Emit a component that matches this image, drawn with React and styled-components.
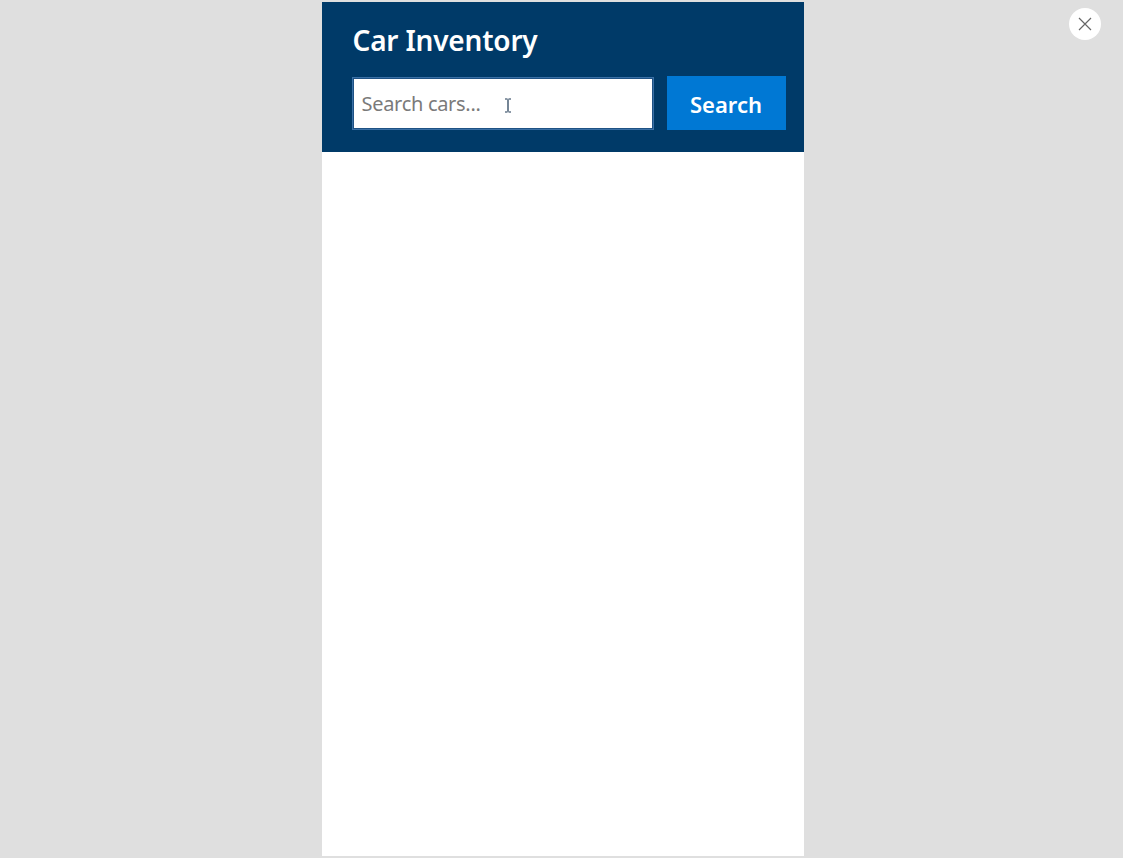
import React from 'react';
import styled, { createGlobalStyle } from 'styled-components';

const Global = createGlobalStyle`
  html, body { margin: 0; padding: 0; background: #dfdfdf; }
  body { font-family: "Noto Sans", "Open Sans", sans-serif; }
`;

const Page = styled.div`
  position: relative;
  height: 858px;
  display: flex;
  justify-content: center;
  padding-top: 2px;
  box-sizing: border-box;
`;

const Panel = styled.div`
  width: 482px;
  height: 854px;
  margin-left: 2px;
  background: #ffffff;
  display: flex;
  flex-direction: column;
`;

const Header = styled.header`
  background: #003a68;
  height: 150px;
  box-sizing: border-box;
  padding: 19px 18px 0 30px;
`;

const Title = styled.h1`
  margin: 0 0 0 1px;
  color: #ffffff;
  font-size: 28px;
  font-weight: 600;
  line-height: 38px;
  letter-spacing: -0.2px;
`;

const SearchRow = styled.div`
  display: flex;
  gap: 13px;
  margin-top: 17px;
  align-items: flex-start;
`;

const InputWrap = styled.div`
  position: relative;
  width: 302px;
  margin-top: 1px;
`;

const Input = styled.input`
  width: 100%;
  height: 53px;
  box-sizing: border-box;
  border: 2px solid #1f5284;
  box-shadow: inset 0 0 0 0 transparent, 0 0 0 0 transparent;
  outline: 1px solid #3a70a6;
  outline-offset: -1px;
  padding: 0 8px;
  font-family: "Noto Sans", sans-serif;
  font-size: 20px;
  letter-spacing: -0.3px;
  color: #333;
  background: #fff;
  &::placeholder { color: #7a7a7a; }
`;

const Cursor = styled.svg`
  position: absolute;
  left: 152px;
  top: 21px;
`;

const Button = styled.button`
  width: 119px;
  height: 54px;
  border: none;
  background: #0078d4;
  color: #fff;
  font-family: "Noto Sans", sans-serif;
  font-weight: 600;
  font-size: 22px;
  padding-top: 2px;
  cursor: pointer;
`;

const Close = styled.button`
  position: absolute;
  top: 8px;
  right: 22px;
  width: 32px;
  height: 32px;
  border-radius: 50%;
  border: none;
  background: #fff;
  display: flex;
  align-items: center;
  justify-content: center;
  padding: 0;
`;

export default function App() {
  return (
    <>
      <Global />
      <Page>
        <Panel>
          <Header>
            <Title>Car Inventory</Title>
            <SearchRow>
              <InputWrap>
                <Input placeholder="Search cars..." />
                <Cursor width="8" height="15" viewBox="0 0 8 15">
                  <path d="M1 1h2.5M4.5 1H7M4 1.5v12M1 14h2.5M4.5 14H7" stroke="#1a3550" strokeWidth="1.2" fill="none" />
                </Cursor>
              </InputWrap>
              <Button>Search</Button>
            </SearchRow>
          </Header>
        </Panel>
        <Close aria-label="Close">
          <svg width="14" height="14" viewBox="0 0 14 14">
            <path d="M1 1l12 12M13 1L1 13" stroke="#666" strokeWidth="1.2" />
          </svg>
        </Close>
      </Page>
    </>
  );
}
